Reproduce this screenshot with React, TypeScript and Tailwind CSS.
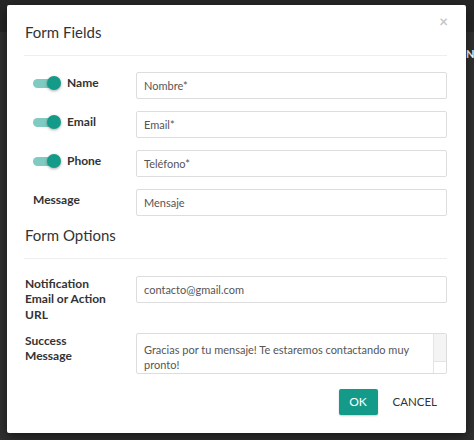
import { useState } from "react";

const fields = [
  { label: "Name", value: "Nombre*", toggle: true },
  { label: "Email", value: "Email*", toggle: true },
  { label: "Phone", value: "Teléfono*", toggle: true },
  { label: "Message", value: "Mensaje", toggle: false },
];

function Toggle({ on, onClick }: { on: boolean; onClick: () => void }) {
  return (
    <button onClick={onClick} className="relative h-[14px] w-[28px] shrink-0" aria-label="toggle">
      <span className={`absolute left-0 top-[3px] h-[9px] w-[25px] rounded-full ${on ? "bg-[#7fcbc1]" : "bg-[#bdbdbd]"}`} />
      <span
        className={`absolute top-0 h-[14px] w-[14px] rounded-full shadow-[0_1px_3px_rgba(0,0,0,0.35)] ${on ? "left-[14px] bg-[#149a89]" : "left-0 bg-[#f1f1f1]"}`}
      />
    </button>
  );
}

export default function App() {
  const [on, setOn] = useState([true, true, true]);

  return (
    <div className="relative h-[440px] w-[474px] overflow-hidden bg-[#303030] font-['Lato',sans-serif] text-[#333]">
      <div className="h-[32px] bg-[#262626]" />
      <span className="absolute left-[466px] top-[46px] text-[11px] font-bold text-white">N</span>

      <div className="absolute left-[7px] top-[5px] flex h-[428px] w-[459px] flex-col rounded-[2px] bg-white pb-[18px] pl-[17px] pr-[19px] pt-[17px] shadow-[0_4px_12px_rgba(0,0,0,0.5)]">
        <button className="absolute right-[18px] top-[9px] text-[15px] font-bold leading-none text-[#c6c6c6]">×</button>

        <h2 className="pl-[1px] text-[15px] leading-[20px]">Form Fields</h2>
        <hr className="mt-[13px] border-[#eeeeee]" />

        <div className="mt-[16px] flex flex-col gap-[12px]">
          {fields.map((f, i) => (
            <div key={f.label} className="flex items-start">
              <div className="flex w-[112px] items-center pl-[9px] pt-[3px]">
                {f.toggle && (
                  <Toggle on={on[i]} onClick={() => setOn((o) => o.map((v, k) => (k === i ? !v : v)))} />
                )}
                <span className={`text-[12px] font-bold leading-[15px] ${f.toggle ? "ml-[6px]" : ""}`}>{f.label}</span>
              </div>
              <input
                defaultValue={f.value}
                className="h-[27px] flex-1 rounded-[2px] border border-[#dddddd] px-[7px] text-[11px] text-[#555] outline-none"
              />
            </div>
          ))}
        </div>

        <h2 className="mt-[9px] pl-[1px] text-[15px] leading-[20px]">Form Options</h2>
        <hr className="mt-[13px] border-[#eeeeee]" />

        <div className="mt-[17px] flex items-start">
          <div className="w-[112px] pl-[1px] text-[12px] font-bold leading-[15.3px]">
            Notification
            <br />
            Email or Action
            <br />
            URL
          </div>
          <input
            defaultValue="contacto@gmail.com"
            className="h-[27px] flex-1 rounded-[2px] border border-[#dddddd] px-[7px] text-[11px] text-[#555] outline-none"
          />
        </div>

        <div className="mt-[11px] flex items-start">
          <div className="w-[112px] pl-[1px] text-[12px] font-bold leading-[15.3px]">
            Success
            <br />
            Message
          </div>
          <div className="flex h-[41px] flex-1 rounded-[2px] border border-[#dddddd]">
            <p className="flex-1 px-[7px] pt-[8px] text-[11px] leading-[15px] text-[#555]">
              Gracias por tu mensaje! Te estaremos contactando muy pronto!
            </p>
            <div className="flex w-[13px] flex-col border-l border-[#e4e4e4]">
              <div className="h-[28px] border-b border-[#e4e4e4] bg-[#f4f4f4]" />
              <div className="flex-1 bg-white" />
            </div>
          </div>
        </div>

        <div className="mt-auto flex items-center justify-end gap-[15px] pr-[10px]">
          <button className="h-[26px] w-[39px] rounded-[2px] bg-[#149a89] text-[12px] text-white shadow-[0_1px_2px_rgba(0,0,0,0.2)]">
            OK
          </button>
          <button className="text-[11.5px] text-[#333]">CANCEL</button>
        </div>
      </div>
    </div>
  );
}
